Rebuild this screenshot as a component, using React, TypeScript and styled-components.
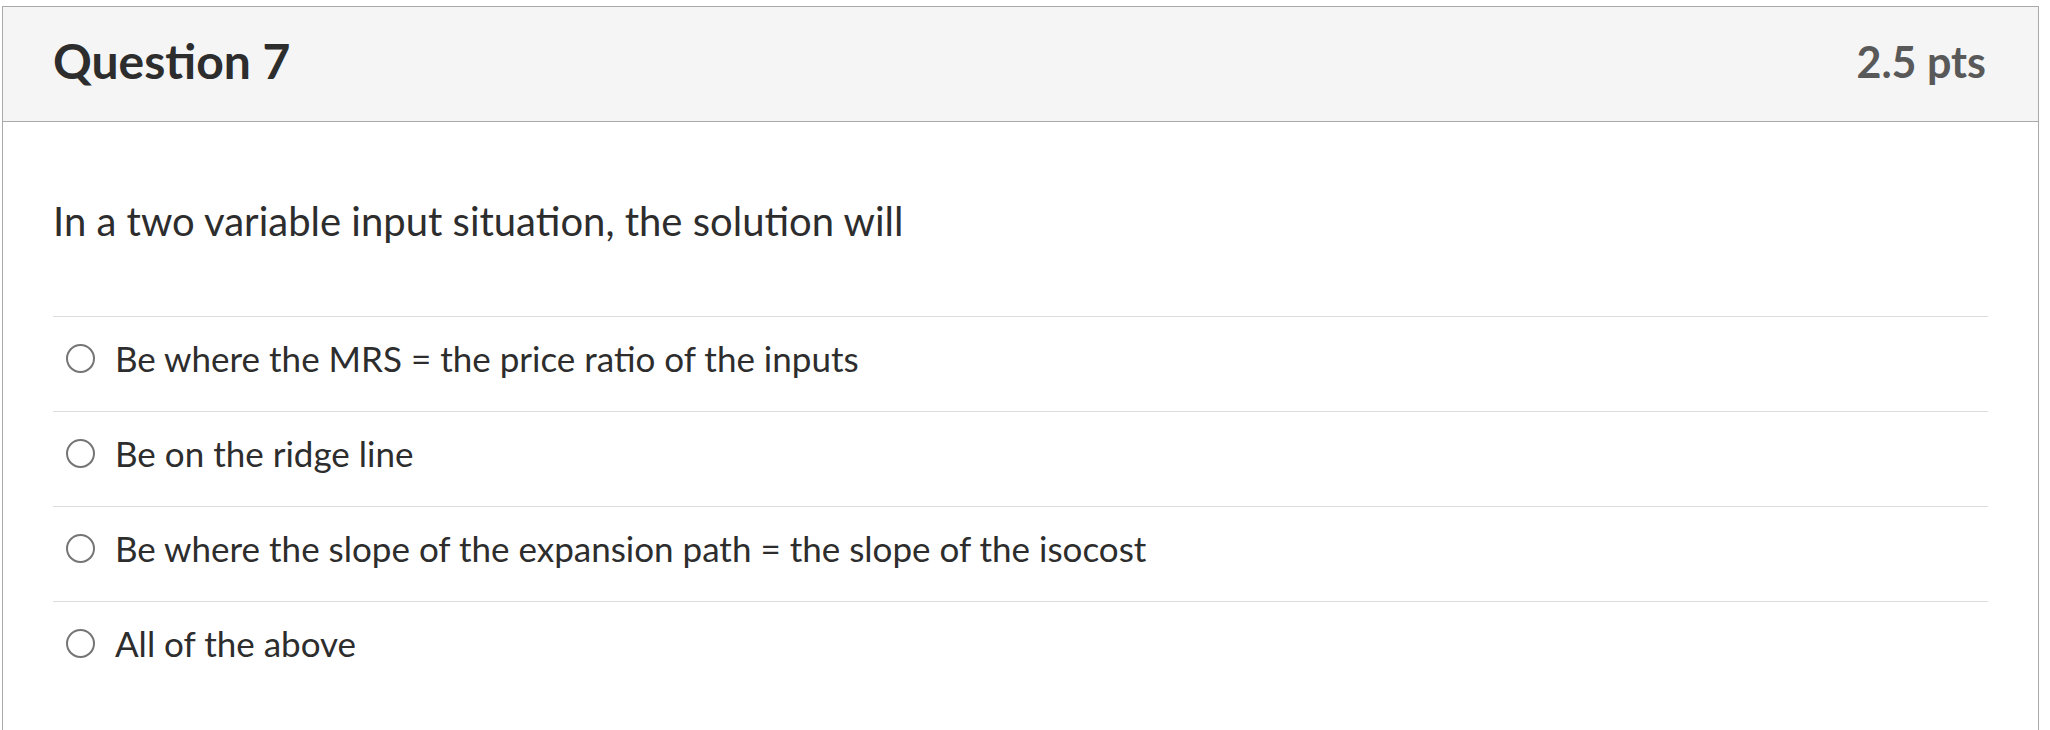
import styled, { createGlobalStyle } from 'styled-components'

const GlobalStyle = createGlobalStyle`
  html, body {
    margin: 0;
    padding: 0;
    background: #ffffff;
  }
  body {
    font-family: Lato, "Open Sans", sans-serif;
    color: #2d2d2d;
  }
`

const Page = styled.div`
  padding: 6px 11px 0 2px;
`

const Card = styled.div`
  border: 1px solid #a9a9a9;
  border-bottom: none;
  background: #ffffff;
  min-height: 740px;
`

const Header = styled.div`
  display: flex;
  align-items: flex-start;
  justify-content: space-between;
  height: 115px;
  box-sizing: border-box;
  padding: 25px 52px 0 50px;
  background: #f5f5f5;
  border-bottom: 1px solid #a9a9a9;
`

const Title = styled.div`
  font-size: 48px;
  font-weight: 700;
  line-height: 1.2;
  color: #2d2d2d;
`

const Points = styled.div`
  font-size: 43px;
  font-weight: 700;
  line-height: 1.2;
  margin-top: 4px;
  color: #595959;
`

const Body = styled.div`
  padding: 75px 50px 0 50px;
`

const Prompt = styled.p`
  margin: 0 0 71px;
  font-size: 40px;
  line-height: 1.2;
  color: #2d2d2d;
`

const Answers = styled.div`
  display: flex;
  flex-direction: column;
`

const Answer = styled.label`
  display: flex;
  align-items: center;
  gap: 20px;
  height: 95px;
  box-sizing: border-box;
  padding: 0 0 12px 13px;
  border-top: 1px solid #dcdcdc;
  font-size: 35px;
  line-height: 1.2;
  color: #2d2d2d;
`

const Radio = styled.span`
  width: 29px;
  height: 29px;
  box-sizing: border-box;
  border-radius: 50%;
  border: 2px solid #757575;
  flex-shrink: 0;
`

const answers = [
  'Be where the MRS = the price ratio of the inputs',
  'Be on the ridge line',
  'Be where the slope of the expansion path = the slope of the isocost',
  'All of the above',
]

const App = () => {
  return (
    <Page>
      <GlobalStyle />
      <Card>
        <Header>
          <Title>Question 7</Title>
          <Points>2.5 pts</Points>
        </Header>
        <Body>
          <Prompt>In a two variable input situation, the solution will</Prompt>
          <Answers>
            {answers.map(a => (
              <Answer key={a}>
                <Radio />
                <span>{a}</span>
              </Answer>
            ))}
          </Answers>
        </Body>
      </Card>
    </Page>
  )
}

export default App
